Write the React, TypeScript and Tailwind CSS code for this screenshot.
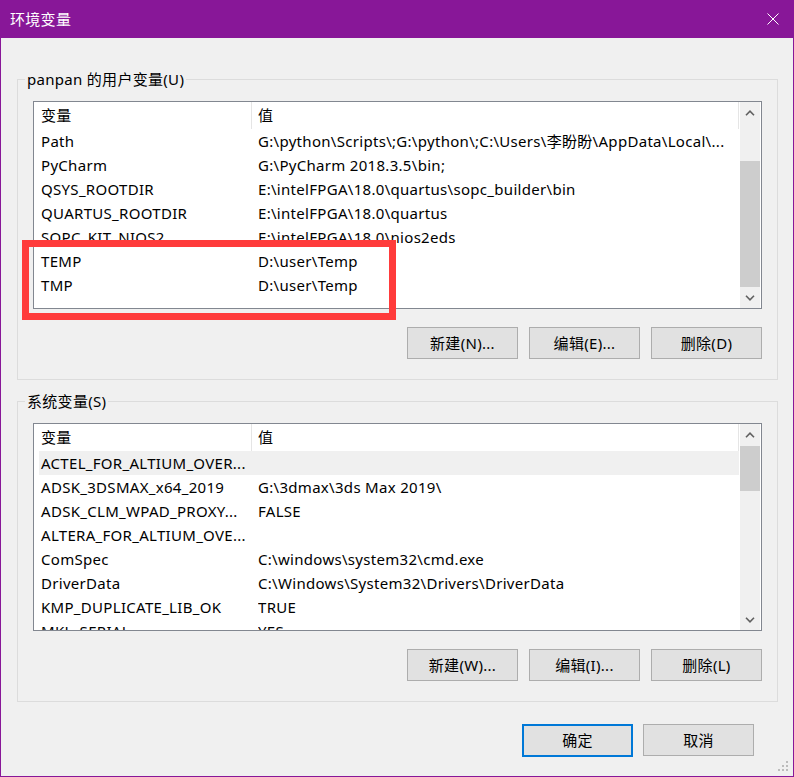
import React from 'react';

type Row = { name: string; value: string };

const userVars: Row[] = [
  { name: 'Path', value: 'G:\\python\\Scripts\\;G:\\python\\;C:\\Users\\李盼盼\\AppData\\Local\\...' },
  { name: 'PyCharm', value: 'G:\\PyCharm 2018.3.5\\bin;' },
  { name: 'QSYS_ROOTDIR', value: 'E:\\intelFPGA\\18.0\\quartus\\sopc_builder\\bin' },
  { name: 'QUARTUS_ROOTDIR', value: 'E:\\intelFPGA\\18.0\\quartus' },
  { name: 'SOPC_KIT_NIOS2', value: 'E:\\intelFPGA\\18.0\\nios2eds' },
  { name: 'TEMP', value: 'D:\\user\\Temp' },
  { name: 'TMP', value: 'D:\\user\\Temp' },
];

const systemVars: Row[] = [
  { name: 'ACTEL_FOR_ALTIUM_OVER...', value: '' },
  { name: 'ADSK_3DSMAX_x64_2019', value: 'G:\\3dmax\\3ds Max 2019\\' },
  { name: 'ADSK_CLM_WPAD_PROXY...', value: 'FALSE' },
  { name: 'ALTERA_FOR_ALTIUM_OVE...', value: '' },
  { name: 'ComSpec', value: 'C:\\windows\\system32\\cmd.exe' },
  { name: 'DriverData', value: 'C:\\Windows\\System32\\Drivers\\DriverData' },
  { name: 'KMP_DUPLICATE_LIB_OK', value: 'TRUE' },
  { name: 'MKL_SERIAL', value: 'YES' },
];

const Chevron = ({ up }: { up?: boolean }) => (
  <svg width="10" height="6" viewBox="0 0 10 6" className="text-[#606060]">
    <path
      d={up ? 'M1 5.2 L5 1.2 L9 5.2' : 'M1 0.8 L5 4.8 L9 0.8'}
      fill="none"
      stroke="currentColor"
      strokeWidth="1.6"
    />
  </svg>
);

const VarList: React.FC<{ rows: Row[]; thumbClass: string; selected?: number }> = ({
  rows,
  thumbClass,
  selected,
}) => (
  <div className="flex h-[208px] w-full border border-[#828790] bg-white">
    <div className="flex w-[706px] flex-col overflow-hidden">
      <div className="flex h-[27px] shrink-0">
        <div className="flex h-full w-[218px] items-center border-r border-[#e5e5e5] pl-[7px]">变量</div>
        <div className="flex h-full w-[487px] items-center border-r border-[#e5e5e5] pl-[6px]">值</div>
      </div>
      {rows.map((row, index) => (
        <div
          key={row.name}
          className={`ml-[5px] flex h-[24px] w-[700px] shrink-0 items-center ${
            index === selected ? 'bg-[#f0f0f0]' : ''
          }`}
        >
          <div className="w-[219px] overflow-hidden whitespace-nowrap pl-[2px]">{row.name}</div>
          <div className="flex-1 overflow-hidden whitespace-nowrap">{row.value}</div>
        </div>
      ))}
    </div>
    <div className="flex w-[20px] flex-col bg-[#f0f0f0]">
      <div className="flex h-[21px] items-center justify-center">
        <Chevron up />
      </div>
      <div className="flex flex-1 flex-col">
        <div className={thumbClass} />
      </div>
      <div className="flex h-[21px] items-center justify-center">
        <Chevron />
      </div>
    </div>
  </div>
);

const Btn: React.FC<{ children: React.ReactNode; primary?: boolean }> = ({ children, primary }) => (
  <button
    className={`w-[111px] bg-[#e1e1e1] text-black ${
      primary ? 'h-[33px] border-2 border-[#0078d7]' : 'h-[32px] border border-[#adadad]'
    }`}
  >
    {children}
  </button>
);

const Group: React.FC<{ title: string; children: React.ReactNode; className?: string }> = ({
  title,
  children,
  className = '',
}) => (
  <fieldset className={`border border-[#dcdcdc] ${className}`}>
    <legend className="ml-[7px] px-[2px] leading-[20px]">{title}</legend>
    <div className="px-[15px] pb-[20px] pt-[12px]">{children}</div>
  </fieldset>
);

export default function App() {
  return (
    <div className="relative flex h-[777px] w-[794px] flex-col border-x border-b border-[#881798] bg-[#f0f0f0] font-[family-name:'Noto_Sans','Noto_Sans_CJK_SC',sans-serif] text-[15px] tracking-[0.3px] text-black">
      <div className="flex h-[38px] shrink-0 items-center justify-between bg-[#881798] pl-[9px] pr-[14px] text-white">
        <span>环境变量</span>
        <svg width="12" height="12" viewBox="0 0 12 12">
          <path d="M0.5 0.5 L11.5 11.5 M11.5 0.5 L0.5 11.5" stroke="white" strokeWidth="1" />
        </svg>
      </div>

      <div className="flex flex-col pl-[16px] pr-[15px] pt-[31px]">
        <Group title="panpan 的用户变量(U)">
          <VarList rows={userVars} thumbClass="mt-auto h-[126px] bg-[#cdcdcd]" />
          <div className="mt-[18px] flex justify-end gap-[11px]">
            <Btn>新建(N)...</Btn>
            <Btn>编辑(E)...</Btn>
            <Btn>删除(D)</Btn>
          </div>
        </Group>

        <Group title="系统变量(S)" className="mt-[11px]">
          <VarList rows={systemVars} selected={0} thumbClass="mt-px h-[45px] bg-[#cdcdcd]" />
          <div className="mt-[18px] flex justify-end gap-[11px]">
            <Btn>新建(W)...</Btn>
            <Btn>编辑(I)...</Btn>
            <Btn>删除(L)</Btn>
          </div>
        </Group>

        <div className="mr-[24px] mt-[22px] flex justify-end gap-[10px]">
          <Btn primary>确定</Btn>
          <Btn>取消</Btn>
        </div>
      </div>

      {/* red annotation box */}
      <div className="absolute left-[21px] top-[240px] h-[80px] w-[374px] border-[7px] border-[#ff3b3b]" />

      {/* resize grip */}
      <svg width="12" height="12" viewBox="0 0 12 12" className="absolute bottom-[3px] right-[3px]">
        <g fill="#bcbcbc">
          <rect x="8" y="0" width="2" height="2" />
          <rect x="4" y="4" width="2" height="2" />
          <rect x="8" y="4" width="2" height="2" />
          <rect x="0" y="8" width="2" height="2" />
          <rect x="4" y="8" width="2" height="2" />
          <rect x="8" y="8" width="2" height="2" />
        </g>
      </svg>
    </div>
  );
}
